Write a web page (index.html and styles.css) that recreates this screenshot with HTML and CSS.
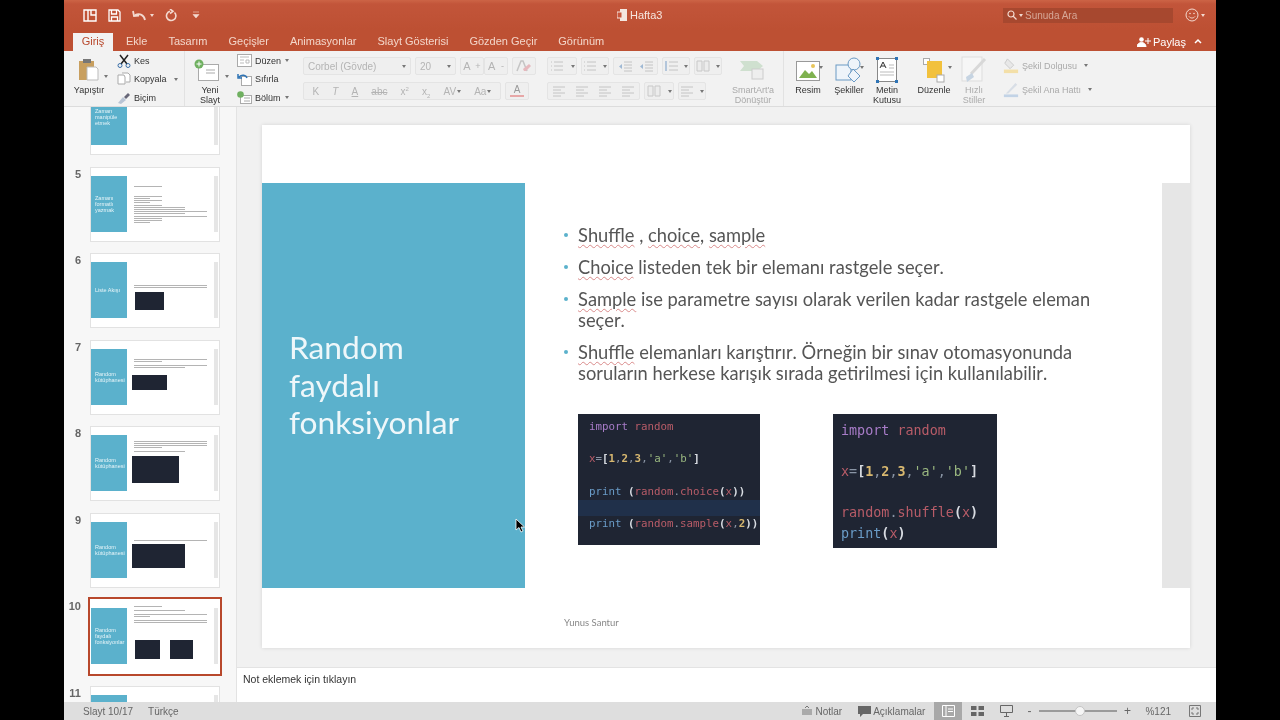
FILE: index.html
```html
<!DOCTYPE html>
<html lang="tr">
<head>
    <meta charset="UTF-8">
    <title>Hafta3</title>
    <link rel="stylesheet" href="styles.css">
</head>
<body>

<div class="app">
    <!-- Baslik cubugu -->
    <header class="titlebar">
        <div class="quick">
            <svg class="q1" width="14" height="13" viewBox="0 0 14 13"><path d="M1 1h12v11H1zM5 1v11M8 1v5h5" fill="none" stroke="#fff" stroke-width="1.4"/></svg>
            <svg class="q2" width="13" height="13" viewBox="0 0 13 13"><path d="M1 1h9l2 2v9H1zM3.500 1v4h5V1M3.500 12V8h6v4" fill="none" stroke="#fff" stroke-width="1.3"/></svg>
            <svg class="q3" width="14" height="11" viewBox="0 0 14 11"><path d="M13 10C12 5 8 3 3 5M1 1l1 5 5-.5" fill="none" stroke="#f3d9cf" stroke-width="1.8"/></svg>
            <span class="q-caret q4"></span>
            <svg class="q5" width="12" height="13" viewBox="0 0 12 13"><path d="M9.500 3.500A4.700 4.700 0 1 1 5 2.300M5 0l3 2.300L5 4.500" fill="none" stroke="#f3d9cf" stroke-width="1.6"/></svg>
            <svg class="q6" width="8" height="8" viewBox="0 0 8 8"><path d="M1 1h6M1 3.500h6L4 7z" fill="#f3d9cf" stroke="#f3d9cf" stroke-width=".6"/></svg>
        </div>
        <div class="doc-name">
            <svg width="10" height="12" viewBox="0 0 10 12"><path d="M3 0h7v12H3z" fill="#f4e6df"/><path d="M0 3h5v6H0z" fill="#c8553a" stroke="#f4e6df"/></svg>
            <span>Hafta3</span>
        </div>
        <div class="search">
            <svg width="10" height="10" viewBox="0 0 10 10"><circle cx="4" cy="4" r="3" fill="none" stroke="#f3d9cf" stroke-width="1.2"/><path d="M6 6l3.500 3.500" stroke="#f3d9cf" stroke-width="1.2"/></svg>
            <span class="q-caret"></span>
            <span>Sunuda Ara</span>
        </div>
        <div class="user">
            <svg width="14" height="14" viewBox="0 0 14 14"><circle cx="7" cy="7" r="6" fill="none" stroke="#f3d9cf"/><circle cx="5" cy="5.500" r=".8" fill="#f3d9cf"/><circle cx="9" cy="5.500" r=".8" fill="#f3d9cf"/><path d="M4 8.500c1.500 2 4.500 2 6 0" fill="none" stroke="#f3d9cf"/></svg>
            <span class="q-caret"></span>
        </div>
    </header>

    <!-- Sekmeler -->
    <nav class="tabs">
        <span class="tab active">Giriş</span>
        <span class="tab">Ekle</span>
        <span class="tab">Tasarım</span>
        <span class="tab">Geçişler</span>
        <span class="tab">Animasyonlar</span>
        <span class="tab">Slayt Gösterisi</span>
        <span class="tab">Gözden Geçir</span>
        <span class="tab">Görünüm</span>
        <span class="share">
            <svg width="14" height="10" viewBox="0 0 14 10"><circle cx="4.500" cy="2.500" r="2.300" fill="#fff"/><path d="M0 10c0-6 9-6 9 0zM11 1v6M8 4h6" fill="#fff" stroke="#fff"/></svg>
            Paylaş
        </span>
        <svg class="collapse" width="8" height="6" viewBox="0 0 8 6"><path d="M1 5l3-3 3 3" fill="none" stroke="#fff" stroke-width="1.500"/></svg>
    </nav>

    <!-- Seridin tamami -->
    <section class="ribbon">
        <div class="group g-clip">
            <div class="big paste">
                <svg width="22" height="24" viewBox="0 0 22 24"><rect x="1" y="3" width="15" height="19" fill="#c89f5f"/><rect x="5" y="1" width="8" height="4" fill="#777"/><path d="M9 9h9l2 2v11H9z" fill="#fff" stroke="#bbb"/></svg>
                <span>Yapıştır</span>
            </div>
            <span class="caret c-paste"></span>
            <div class="stack">
                <div class="row-tool">
                    <svg width="14" height="14" viewBox="0 0 14 14"><path d="M3 1l7 9M11 1L4 10" stroke="#222" stroke-width="1.500"/><circle cx="3" cy="11.500" r="2" fill="none" stroke="#3a6fa8"/><circle cx="11" cy="11.500" r="2" fill="none" stroke="#3a6fa8"/></svg>
                    <span>Kes</span>
                </div>
                <div class="row-tool">
                    <svg width="14" height="14" viewBox="0 0 14 14"><path d="M1 3h6l1 2v7H1zM5 1h6l2 2v7H9" fill="#fff" stroke="#aaa"/></svg>
                    <span>Kopyala</span><span class="caret"></span>
                </div>
                <div class="row-tool">
                    <svg width="14" height="14" viewBox="0 0 14 14"><path d="M1 12l5-6 3 3-5 4z" fill="#b9c4d4"/><path d="M7 6l4-4 2 2-4 4z" fill="#667"/></svg>
                    <span>Biçim</span>
                </div>
            </div>
        </div>

        <div class="group g-slides">
            <div class="big new-slide">
                <svg width="25" height="22" viewBox="0 0 25 22"><rect x="4.500" y="5.500" width="20" height="16" fill="#fff" stroke="#aaa"/><path d="M12 11h9M12 14h9" stroke="#aaa"/><circle cx="5" cy="5" r="4.500" fill="#6fb060"/><path d="M5 2.500v5M2.500 5h5" stroke="#fff"/></svg>
                <span>Yeni<br>Slayt</span>
            </div>
            <span class="caret c-new"></span>
            <div class="stack">
                <div class="row-tool">
                    <svg width="15" height="13" viewBox="0 0 15 13"><rect x=".5" y=".5" width="14" height="12" fill="#fff" stroke="#aaa"/><path d="M3 3h9M3 6h4M3 9h4M9 6h3v3H9z" stroke="#bbb" fill="none"/></svg>
                    <span>Düzen</span><span class="caret near"></span>
                </div>
                <div class="row-tool">
                    <svg width="15" height="13" viewBox="0 0 15 13"><rect x="4.500" y="3.500" width="10" height="9" fill="#fff" stroke="#aaa"/><path d="M10 5C9 2 5 1 2 4M1 1v4h4" fill="none" stroke="#2f74b5" stroke-width="1.500"/></svg>
                    <span>Sıfırla</span>
                </div>
                <div class="row-tool">
                    <svg width="15" height="13" viewBox="0 0 15 13"><rect x="3.500" y="4.500" width="11" height="8" fill="#fff" stroke="#aaa"/><path d="M7 7h6M7 10h6" stroke="#aaa"/><circle cx="3.500" cy="3.500" r="3.300" fill="#6fb060"/></svg>
                    <span>Bölüm</span><span class="caret near"></span>
                </div>
            </div>
        </div>

        <div class="group g-font">
            <div class="tool-row">
                <span class="seg w-font">Corbel (Gövde)<i class="caret"></i></span>
                <span class="seg w-size">20<i class="caret"></i></span>
                <span class="seg w-ab">A<small>+</small></span><span class="seg w-ab joined">A<small>-</small></span>
                <span class="seg w-clear">
                    <svg width="16" height="13" viewBox="0 0 16 13"><path d="M1 11L5 1h2l4 10" fill="none" stroke="#c4c4c4" stroke-width="1.500"/><path d="M7 9l6-5 2 2-5 5H8z" fill="#e6b8bd"/></svg>
                </span>
            </div>
            <div class="tool-row">
                <span class="seg w-styles">
                    <b>K</b><em>T</em><u>A</u><s>abc</s><span>x<sup>2</sup></span><span>x<sub>2</sub></span><span>AV<i class="caret near"></i></span><span>Aa<i class="caret near"></i></span>
                </span>
                <span class="seg w-clear color">A<i class="color-bar"></i></span>
            </div>
        </div>

        <div class="group g-para">
            <div class="tool-row">
                <span class="seg w-30"><svg class="ic"><use href="#bullets"/></svg><i class="caret"></i></span>
                <span class="seg w-28"><svg class="ic"><use href="#bullets"/></svg><i class="caret"></i></span>
                <span class="seg w-45"><svg class="ic"><use href="#indent"/></svg><svg class="ic"><use href="#indent"/></svg></span>
                <span class="seg w-28"><svg class="ic"><use href="#spacing"/></svg><i class="caret"></i></span>
                <span class="seg w-28"><svg class="ic"><use href="#columns"/></svg><i class="caret"></i></span>
            </div>
            <div class="tool-row">
                <span class="seg w-93"><svg class="ic"><use href="#align"/></svg><svg class="ic"><use href="#align"/></svg><svg class="ic"><use href="#align"/></svg><svg class="ic"><use href="#align"/></svg></span>
                <span class="seg w-30"><svg class="ic"><use href="#columns"/></svg><i class="caret"></i></span>
                <span class="seg w-28"><svg class="ic"><use href="#align"/></svg><i class="caret"></i></span>
            </div>
        </div>

        <div class="group g-smart">
            <div class="big faded">
                <svg width="28" height="22" viewBox="0 0 28 22"><path d="M1 2h17l6 5-6 5H1l4-5z" fill="#cfe0cf"/><rect x="13" y="10" width="11" height="10" fill="#eee" stroke="#ccc"/></svg>
                <span>SmartArt'a<br>Dönüştür</span>
            </div>
        </div>

        <div class="group g-insert">
            <div class="big w-pic">
                <svg width="24" height="24" viewBox="0 0 24 24"><rect x=".5" y="3.500" width="23" height="19" fill="#fff" stroke="#999"/><path d="M3 20l6-8 4 4 3-3 5 7z" fill="#7fb24f"/><circle cx="17" cy="8" r="2" fill="#e8c55a"/></svg>
                <span>Resim</span>
            </div>
            <span class="caret c-pic"></span>
            <div class="big w-shape">
                <svg width="28" height="26" viewBox="0 0 28 26"><rect x="1" y="8" width="15" height="15" fill="#eef4fa" stroke="#6b9ac4"/><circle cx="19" cy="7" r="6" fill="#eef4fa" stroke="#6b9ac4"/><path d="M18 12l7 7-6 6-6-6z" fill="#eef4fa" stroke="#6b9ac4"/></svg>
                <span>Şekiller</span>
            </div>
            <span class="caret c-shape"></span>
            <div class="big w-textbox">
                <svg width="22" height="26" viewBox="0 0 22 26"><rect x="1.500" y="1.500" width="19" height="23" fill="#fff" stroke="#888"/><path d="M13 8h5M13 11h5M4 15h14M4 18h14" stroke="#bbb"/><path d="M4 11l3-6 3 6M5 9h4" fill="none" stroke="#333"/><rect x="0" y="0" width="3" height="3" fill="#2f74b5"/><rect x="19" y="0" width="3" height="3" fill="#2f74b5"/><rect x="0" y="23" width="3" height="3" fill="#2f74b5"/><rect x="19" y="23" width="3" height="3" fill="#2f74b5"/></svg>
                <span>Metin<br>Kutusu</span>
            </div>
        </div>

        <div class="group g-arrange">
            <div class="big w-arr">
                <svg width="22" height="26" viewBox="0 0 22 26"><rect x=".5" y="1.500" width="6" height="6" fill="#fff" stroke="#aaa"/><rect x="4" y="4" width="15" height="17" fill="#f2c13d"/><rect x="14" y="18" width="7" height="7" fill="#fff" stroke="#aaa"/></svg>
                <span>Düzenle</span>
            </div>
            <span class="caret c-arr"></span>
            <div class="big w-quick faded">
                <svg width="26" height="28" viewBox="0 0 26 28"><rect x="1" y="1" width="20" height="24" fill="#f6f6f6" stroke="#ddd"/><path d="M24 3L10 18" stroke="#d8d8d8" stroke-width="3"/><path d="M11 17l-6 4 1 5 7-5z" fill="#c6d4e2"/></svg>
                <span>Hızlı<br>Stiller</span>
            </div>
            <div class="stack-wide faded">
                <div class="row-tool">
                    <svg width="16" height="18" viewBox="0 0 18 20"><path d="M5 2l7 7-4 4-6-6z" fill="#e8e8e8" stroke="#c8c8c8"/><rect x="1" y="14" width="16" height="4" fill="#f3dfa8"/></svg>
                    <span>Şekil Dolgusu</span><span class="caret"></span>
                </div>
                <div class="row-tool">
                    <svg width="16" height="18" viewBox="0 0 18 20"><path d="M14 2L5 12l-2 2 3 0 10-10z" fill="#d8dee6"/><rect x="1" y="15" width="16" height="3" fill="#c2d3e6"/></svg>
                    <span>Şekil Ana Hattı</span><span class="caret"></span>
                </div>
            </div>
        </div>
    </section>

    <main class="workspace">
        <!-- Slayt listesi -->
        <aside class="sidebar">
            <div class="thumb-row first">
                <span class="thumb-num"></span>
                <div class="thumb">
                    <div class="t-side">Zaman<br>manipüle<br>etmek</div>
                    <div class="t-strip"></div>
                    <div class="t-lines top-4"><i></i></div>
                    <div class="t-code c4"></div>
                </div>
            </div>
            <div class="thumb-row">
                <span class="thumb-num">5</span>
                <div class="thumb">
                    <div class="t-side">Zamanı<br>formatlı<br>yazmak</div>
                    <div class="t-strip"></div>
                    <div class="t-lines top-5"><i class="s"></i><b></b><i class="s"></i><i class="xs"></i><i class="s"></i><i class="xs"></i><i class="s"></i><i class="m"></i><i class="m"></i><i></i><i class="m"></i><i></i><i class="s"></i><i class="s"></i><i class="xs"></i></div>
                </div>
            </div>
            <div class="thumb-row">
                <span class="thumb-num">6</span>
                <div class="thumb">
                    <div class="t-side">Liste Akışı</div>
                    <div class="t-strip"></div>
                    <div class="t-lines top-6"><i></i><i></i></div>
                    <div class="t-code c6"></div>
                </div>
            </div>
            <div class="thumb-row">
                <span class="thumb-num">7</span>
                <div class="thumb">
                    <div class="t-side">Random<br>kütüphanesi</div>
                    <div class="t-strip"></div>
                    <div class="t-lines top-7"><i></i><i class="s"></i><b></b><i></i><i class="m"></i></div>
                    <div class="t-code c7"></div>
                </div>
            </div>
            <div class="thumb-row">
                <span class="thumb-num">8</span>
                <div class="thumb">
                    <div class="t-side">Random<br>kütüphanesi</div>
                    <div class="t-strip"></div>
                    <div class="t-lines top-8"><i></i><i></i><i></i><i class="s"></i><b></b><i class="m"></i></div>
                    <div class="t-code c8"></div>
                </div>
            </div>
            <div class="thumb-row">
                <span class="thumb-num">9</span>
                <div class="thumb">
                    <div class="t-side">Random<br>kütüphanesi</div>
                    <div class="t-strip"></div>
                    <div class="t-lines top-9"><i></i></div>
                    <div class="t-code c9"></div>
                </div>
            </div>
            <div class="thumb-row">
                <span class="thumb-num">10</span>
                <div class="thumb selected">
                    <div class="t-side">Random<br>faydalı<br>fonksiyonlar</div>
                    <div class="t-strip"></div>
                    <div class="t-lines top-10"><i class="s"></i><b></b><i class="m"></i><b></b><i></i><i class="xs"></i><b></b><i></i><i></i></div>
                    <div class="t-code c10a"></div>
                    <div class="t-code c10b"></div>
                </div>
            </div>
            <div class="thumb-row">
                <span class="thumb-num">11</span>
                <div class="thumb">
                    <div class="t-side"></div>
                    <div class="t-strip"></div>
                </div>
            </div>
        </aside>

        <div class="editor">
            <div class="stage">
                <!-- Slayt: serbest tuval -->
                <div class="slide">
                    <div class="slide-side">
                        <h1>Random<br>faydalı<br>fonksiyonlar</h1>
                    </div>
                    <div class="slide-strip"></div>
                    <ul class="slide-body">
                        <li><span class="sp">Shuffle</span> , <span class="sp">choice</span>, <span class="sp">sample</span></li>
                        <li><span class="sp">Choice</span> listeden tek bir elemanı rastgele seçer.</li>
                        <li><span class="sp">Sample</span> ise parametre sayısı olarak verilen kadar rastgele eleman<br>seçer.</li>
                        <li><span class="sp">Shuffle</span> elemanları karıştırır. Örneğin bir sınav otomasyonunda<br>soruların herkese karışık sırada getirilmesi için kullanılabilir.</li>
                    </ul>
                    <pre class="code code-a"><span class="pu">import</span> <span class="re">random</span>

<span class="re">x</span>=<span class="wh">[</span><span class="ye">1</span>,<span class="ye">2</span>,<span class="ye">3</span>,<span class="gr">'a'</span>,<span class="gr">'b'</span><span class="wh">]</span>

<span class="bl">print</span> <span class="wh">(</span><span class="re">random</span>.<span class="re">choice</span><span class="wh">(</span><span class="re">x</span><span class="wh">))</span>
<span class="hl"> </span>
<span class="bl">print</span> <span class="wh">(</span><span class="re">random</span>.<span class="re">sample</span><span class="wh">(</span><span class="re">x</span>,<span class="ye">2</span><span class="wh">))</span></pre>
                    <pre class="code code-b"><span class="pu">import</span> <span class="re">random</span>

<span class="re">x</span>=<span class="wh">[</span><span class="ye">1</span>,<span class="ye">2</span>,<span class="ye">3</span>,<span class="gr">'a'</span>,<span class="gr">'b'</span><span class="wh">]</span>

<span class="re">random</span>.<span class="re">shuffle</span><span class="wh">(</span><span class="re">x</span><span class="wh">)</span>
<span class="bl">print</span><span class="wh">(</span><span class="re">x</span><span class="wh">)</span></pre>
                    <div class="slide-footer">Yunus Santur</div>
                    <svg class="cursor" width="10" height="15" viewBox="0 0 10 15"><path d="M1 1v11l3-2.500 2 4.500 2-1-2-4h3.500z" fill="#000" stroke="#fff" stroke-width=".8"/></svg>
                </div>
            </div>
            <div class="notes">Not eklemek için tıklayın</div>
        </div>
    </main>

    <footer class="statusbar">
        <span class="st-slide">Slayt 10/17</span>
        <span class="st-lang">Türkçe</span>
        <div class="st-right">
            <span class="st-item">
                <svg width="12" height="10" viewBox="0 0 12 10"><path d="M1 6h10M1 8h10M1 4h10M4 2l2-2 2 2" fill="none" stroke="#777"/></svg>
                Notlar
            </span>
            <span class="st-item">
                <svg width="13" height="11" viewBox="0 0 13 11"><path d="M0 0h13v8H5l-3 3V8H0z" fill="#666"/></svg>
                Açıklamalar
            </span>
            <span class="view active">
                <svg width="13" height="12" viewBox="0 0 13 12"><path d="M.5.500h12v11H.5zM4 .500v11M6 4h5M6 6.500h5" fill="none" stroke="#fff"/></svg>
            </span>
            <span class="view">
                <svg width="13" height="10" viewBox="0 0 13 10"><path d="M0 0h5.500v4H0zM7.500 0H13v4H7.500zM0 6h5.500v4H0zM7.500 6H13v4H7.500z" fill="#666"/></svg>
            </span>
            <span class="view">
                <svg width="13" height="12" viewBox="0 0 13 12"><path d="M.5.500h12v7H.5zM6.500 8v3M4 11.500h5" fill="none" stroke="#666"/></svg>
            </span>
            <span class="zoom-sign minus">-</span>
            <span class="slider"><i></i></span>
            <span class="zoom-sign">+</span>
            <span class="zoom-val">%121</span>
            <svg class="fit" width="12" height="12" viewBox="0 0 12 12"><path d="M.5.500h11v11H.5zM3 5V3h2M9 5V3H7M3 7v2h2M9 7v2H7" fill="none" stroke="#777"/></svg>
        </div>
    </footer>
</div>

<svg class="defs" width="0" height="0">
    <symbol id="bullets" viewBox="0 0 14 12"><path d="M1 2h1M1 6h1M1 10h1M4 2h9M4 6h9M4 10h9" stroke="#c4c4c4"/></symbol>
    <symbol id="indent" viewBox="0 0 14 12"><path d="M6 2h8M6 5h8M6 8h8M6 11h8" stroke="#c4c4c4"/><path d="M1 6.500l3-2.500v5z" fill="#9fb9d4"/></symbol>
    <symbol id="spacing" viewBox="0 0 14 12"><path d="M5 2h9M5 6h9M5 10h9" stroke="#c4c4c4"/><path d="M2 1v10" stroke="#9fb9d4" stroke-width="1.500"/></symbol>
    <symbol id="columns" viewBox="0 0 14 12"><path d="M1 1h5v10H1zM8 1h5v10H8z" fill="#ececec" stroke="#c8c8c8"/></symbol>
    <symbol id="align" viewBox="0 0 14 12"><path d="M1 2h12M1 5h8M1 8h12M1 11h8" stroke="#c4c4c4"/></symbol>
</svg>

</body>
</html>
```

FILE: styles.css
```css
* {
    box-sizing: border-box;
}

body {
    margin: 0;
    background-color: #000;
    font-family: "Liberation Sans", Arial, sans-serif;
    color: #333;
    overflow: hidden;
}

/* o ekran goruntusu video karesi, hafif yumusak */
.app {
    width: 1152px;
    height: 720px;
    margin: 0 auto;
    display: flex;
    flex-direction: column;
    background-color: #f2f2f2;
    overflow: hidden;
    filter: blur(.35px);
}

.defs {
    position: absolute;
}

/* baslik */
.titlebar {
    height: 30px;
    flex: none;
    display: flex;
    align-items: center;
    background: linear-gradient(#cc6446 0, #c2553a 4px, #bd5033 100%);
    color: #f6e5de;
    font-size: 11px;
}

.quick {
    width: 543px;
    display: flex;
    align-items: center;
    padding-left: 19px;
}

.q2 { margin-left: 11px; }
.q3 { margin-left: 11px; }
.q4 { margin-left: 4px; }
.q5 { margin-left: 11px; }
.q6 { margin-left: 15px; }

.q-caret {
    width: 0;
    height: 0;
    border-left: 2px solid transparent;
    border-right: 2px solid transparent;
    border-top: 3px solid #f3d9cf;
}

.doc-name {
    width: 396px;
    display: flex;
    align-items: center;
    gap: 3px;
    padding-left: 10px;
}

.search {
    width: 170px;
    height: 15px;
    display: flex;
    align-items: center;
    gap: 2px;
    padding-left: 4px;
    background-color: #a7482f;
    color: #d6a797;
    font-size: 10px;
}

.user {
    display: flex;
    align-items: center;
    gap: 2px;
    margin-left: 12px;
}

/* sekmeler */
.tabs {
    height: 21px;
    flex: none;
    display: flex;
    align-items: flex-end;
    gap: 21px;
    padding: 0 14px 0 9px;
    background-color: #bd5033;
    color: #f3d6ca;
    font-size: 11px;
}

.tab {
    height: 18px;
    line-height: 17px;
}

.tab.active {
    width: 40px;
    margin-right: -8px;
    background-color: #f2f2f2;
    color: #b8482c;
    text-align: center;
}

.share {
    height: 18px;
    margin-left: auto;
    display: flex;
    align-items: center;
    gap: 2px;
    color: #fff;
}

.collapse {
    margin: 0 0 7px -13px;
}

/* serit */
.ribbon {
    height: 56px;
    flex: none;
    display: flex;
    background-color: #f2f2f2;
    border-bottom: 1px solid #dcdcdc;
    font-size: 9px;
    color: #333;
    position: relative;
}

.group {
    display: flex;
    position: relative;
    flex: none;
}

.g-clip {
    width: 121px;
    padding-left: 10px;
    border-right: 1px solid #e2e2e2;
}

.g-slides {
    width: 110px;
    padding-left: 9px;
}

.g-font {
    width: 252px;
    padding: 6px 0 0 8px;
    flex-direction: column;
    gap: 7px;
}

.g-para {
    width: 182px;
    padding: 6px 0 0 0;
    flex-direction: column;
    gap: 7px;
}

.g-smart {
    width: 55px;
    border-right: 1px solid #e2e2e2;
}

.g-insert {
    width: 122px;
    padding-left: 6px;
}

.g-arrange {
    padding-left: 10px;
}

.big {
    display: flex;
    flex-direction: column;
    align-items: center;
    flex: none;
    padding-top: 5px;
    line-height: 10px;
    text-align: center;
}

.big svg {
    height: 28px;
    flex: none;
}

.big span {
    margin-top: 1px;
}

.faded {
    color: #aaa;
}

.paste {
    width: 30px;
}

.new-slide {
    width: 32px;
}

.new-slide svg {
    margin-right: 7px;
}

.g-smart .big {
    width: 48px;
}

.w-pic { width: 36px; }
.w-shape { width: 34px; margin-left: 6px; }
.w-textbox { width: 34px; margin-left: 4px; }
.w-arr { width: 36px; }
.w-quick { width: 28px; margin-left: 8px; }

.caret {
    display: inline-block;
    width: 0;
    height: 0;
    margin-left: 4px;
    border-left: 2px solid transparent;
    border-right: 2px solid transparent;
    border-top: 3px solid #777;
    flex: none;
}

.caret.near {
    margin-left: 1px;
    vertical-align: middle;
}

.c-paste { position: absolute; left: 36px; top: 24px; }
.c-new { position: absolute; left: 36px; top: 24px; }
.c-pic { position: absolute; left: 31px; top: 15px; }
.c-shape { position: absolute; left: 72px; top: 15px; }
.c-arr { position: absolute; left: 38px; top: 15px; }

.stack {
    margin-left: 13px;
    padding-top: 2px;
    display: flex;
    flex-direction: column;
    gap: 3.500px;
}

.g-slides .stack {
    margin-left: 11px;
}

.row-tool {
    height: 15px;
    display: flex;
    align-items: center;
    gap: 3px;
}

.stack-wide {
    margin-left: 15px;
    padding-top: 6px;
    display: flex;
    flex-direction: column;
    gap: 7px;
}

.stack-wide .row-tool {
    height: 17px;
}

.tool-row {
    display: flex;
    gap: 4px;
    height: 18px;
}

.seg {
    display: flex;
    align-items: center;
    justify-content: space-around;
    height: 18px;
    flex: none;
    background-color: #efefef;
    border: 1px solid #e4e4e4;
    border-radius: 2px;
    color: #b4b4b4;
    font-size: 10px;
}

.w-font { width: 108px; justify-content: space-between; padding: 0 4px; }
.w-size { width: 41px; justify-content: space-between; padding: 0 4px; }
.w-ab { width: 24px; font-size: 11px; }
.joined { margin-left: -4px; }
.w-clear { width: 24px; }
.w-styles { width: 198px; padding: 0 2px; }
.w-30 { width: 30px; }
.w-28 { width: 28px; }
.w-45 { width: 45px; }
.w-93 { width: 93px; }

.w-styles b,
.w-styles em,
.w-styles u,
.w-styles s {
    font-weight: normal;
}

.w-styles sup,
.w-styles sub {
    font-size: 6px;
    line-height: 0;
}

.color {
    flex-direction: column;
    justify-content: center;
    color: #999;
    line-height: 10px;
}

.color-bar {
    width: 14px;
    height: 2px;
    background-color: #e7a7a7;
}

.ic {
    width: 14px;
    height: 12px;
}

/* ana alan */
.workspace {
    flex: 1;
    display: flex;
    min-height: 0;
}

.sidebar {
    width: 173px;
    flex: none;
    overflow: hidden;
    background-color: #f7f7f7;
    border-right: 1px solid #e3e3e3;
}

.thumb-row {
    height: 75px;
    margin-bottom: 11.5px;
    display: flex;
    gap: 9px;
}

.thumb-row.first {
    margin-top: -27px;
}

.thumb-num {
    width: 17px;
    padding-top: 1px;
    text-align: right;
    font-size: 11px;
    font-weight: bold;
    color: #666;
}

.thumb {
    width: 130px;
    height: 75px;
    position: relative;
    background-color: #fff;
    border: 1px solid #e2e2e2;
}

.thumb.selected {
    outline: 2px solid #b8482c;
    border-color: #fff;
}

.t-side {
    position: absolute;
    left: 0;
    top: 8px;
    width: 36px;
    height: 56px;
    display: flex;
    align-items: center;
    padding-left: 4px;
    background-color: #5bb1cc;
    color: #e6f4f8;
    font-size: 5.500px;
    line-height: 6px;
    overflow: hidden;
}

.t-strip {
    position: absolute;
    right: 1px;
    top: 8px;
    width: 4px;
    height: 56px;
    background-color: #e6e6e6;
}

.t-lines {
    position: absolute;
    left: 43px;
    width: 73px;
    display: flex;
    flex-direction: column;
    gap: 1px;
    filter: blur(.3px);
}

.t-lines i {
    display: block;
    height: 1px;
    background-color: #b4b4b4;
}

.t-lines i.m { width: 70%; }
.t-lines i.s { width: 38%; }
.t-lines i.xs { width: 22%; }

.t-lines b {
    display: block;
    height: 7px;
}

.top-4 { top: 2px; }
.top-5 { top: 18px; gap: 1.200px; }
.top-6 { top: 31px; }
.top-7 { top: 18px; }
.top-8 { top: 14px; }
.top-9 { top: 26px; }
.top-10 { top: 6px; }

.top-7 b,
.top-8 b,
.top-10 b {
    height: 1px;
}

.t-code {
    position: absolute;
    background-color: #1f2533;
}

.c4 { left: 41px; top: 3px; width: 22px; height: 21px; }
.c6 { left: 44px; top: 38px; width: 29px; height: 18px; }
.c7 { left: 41px; top: 34px; width: 35px; height: 15px; }
.c8 { left: 41px; top: 29px; width: 47px; height: 27px; }
.c9 { left: 41px; top: 30px; width: 53px; height: 24px; }
.c10a { left: 44px; top: 40px; width: 25px; height: 19px; }
.c10b { left: 79px; top: 40px; width: 23px; height: 19px; }

.editor {
    flex: 1;
    display: flex;
    flex-direction: column;
    min-width: 0;
}

.stage {
    flex: 1;
    padding: 18px 26px 0 25px;
    background-color: #f1f1f1;
}

.slide {
    width: 928px;
    height: 523px;
    position: relative;
    background-color: #fff;
    box-shadow: 0 0 4px rgba(0, 0, 0, 0.12);
}

.slide-side {
    position: absolute;
    left: 0;
    top: 58px;
    width: 263px;
    height: 405px;
    display: flex;
    align-items: center;
    padding-left: 27px;
    background-color: #5bb1cc;
}

.slide-side h1 {
    margin: 0;
    color: #eef7fa;
    font-family: Lato, sans-serif;
    font-weight: 400;
    font-size: 31.700px;
    line-height: 37.700px;
}

.slide-strip {
    position: absolute;
    right: 0;
    top: 58px;
    width: 28px;
    height: 405px;
    background-color: #e6e6e6;
}

.slide-body {
    position: absolute;
    left: 316px;
    top: 99.500px;
    width: 530px;
    margin: 0;
    padding: 0;
    list-style: none;
    font-family: Lato, sans-serif;
    font-size: 18.300px;
    font-kerning: none;
    line-height: 21.300px;
    color: #555;
}

.slide-body li {
    position: relative;
    margin-bottom: 10.800px;
}

.slide-body li::before {
    content: "";
    position: absolute;
    left: -14px;
    top: 8px;
    width: 4px;
    height: 4px;
    border-radius: 50%;
    background-color: #5bb1cc;
}

.sp {
    text-decoration: underline wavy #d98a8a 1px;
    text-underline-offset: 2px;
}

.code {
    position: absolute;
    margin: 0;
    background-color: #1f2533;
    font-family: "DejaVu Sans Mono", monospace;
    color: #8a95a5;
    overflow: hidden;
}

.code-a {
    left: 316px;
    top: 289px;
    width: 182px;
    height: 131px;
    padding: 5px 0 0 11px;
    font-size: 10.800px;
    line-height: 16.200px;
}

.code-b {
    left: 571px;
    top: 289px;
    width: 164px;
    height: 134px;
    padding: 7px 0 0 8px;
    font-size: 13.400px;
    line-height: 20.500px;
}

.hl {
    display: inline-block;
    width: 182px;
    margin-left: -11px;
    background-color: #20304a;
}

.pu { color: #a87cc8; }
.re { color: #b85c68; }
.bl { color: #6a9cc8; }
.ye { color: #d8b870; font-weight: bold; }
.gr { color: #9ab880; }
.wh { color: #d8dce2; font-weight: bold; }

.slide-footer {
    position: absolute;
    left: 302px;
    top: 492px;
    color: #888;
    font-family: Lato, sans-serif;
    font-size: 9.500px;
}

.cursor {
    position: absolute;
    left: 253px;
    top: 393px;
}

.notes {
    height: 35px;
    flex: none;
    padding: 5px 6px;
    background-color: #fff;
    border-top: 1px solid #e3e3e3;
    font-size: 10.500px;
    color: #333;
}

/* durum cubugu */
.statusbar {
    height: 18px;
    flex: none;
    display: flex;
    align-items: center;
    background-color: #dedede;
    color: #666;
    font-size: 10px;
}

.st-slide { margin-left: 19px; }
.st-lang { margin-left: 15px; }

.st-right {
    margin-left: auto;
    height: 100%;
    display: flex;
    align-items: center;
}

.st-item {
    display: flex;
    align-items: center;
    gap: 2px;
    margin-right: 16px;
}

.view {
    width: 28px;
    height: 100%;
    display: flex;
    align-items: center;
    justify-content: center;
    margin-right: 1px;
}

.view.active {
    margin-left: -7px;
    background-color: #a8a8a8;
}

.zoom-sign {
    width: 10px;
    text-align: center;
    font-size: 12px;
}

.minus {
    margin-left: 3px;
}

.slider {
    width: 78px;
    height: 2px;
    margin: 0 5px;
    position: relative;
    background-color: #9a9a9a;
}

.slider i {
    position: absolute;
    left: 36px;
    top: -4px;
    width: 10px;
    height: 10px;
    border-radius: 50%;
    background-color: #f6f6f6;
    border: 1px solid #c4c4c4;
}

.zoom-val {
    margin-left: 13px;
}

.fit {
    margin: 0 15px 0 18px;
}
```
